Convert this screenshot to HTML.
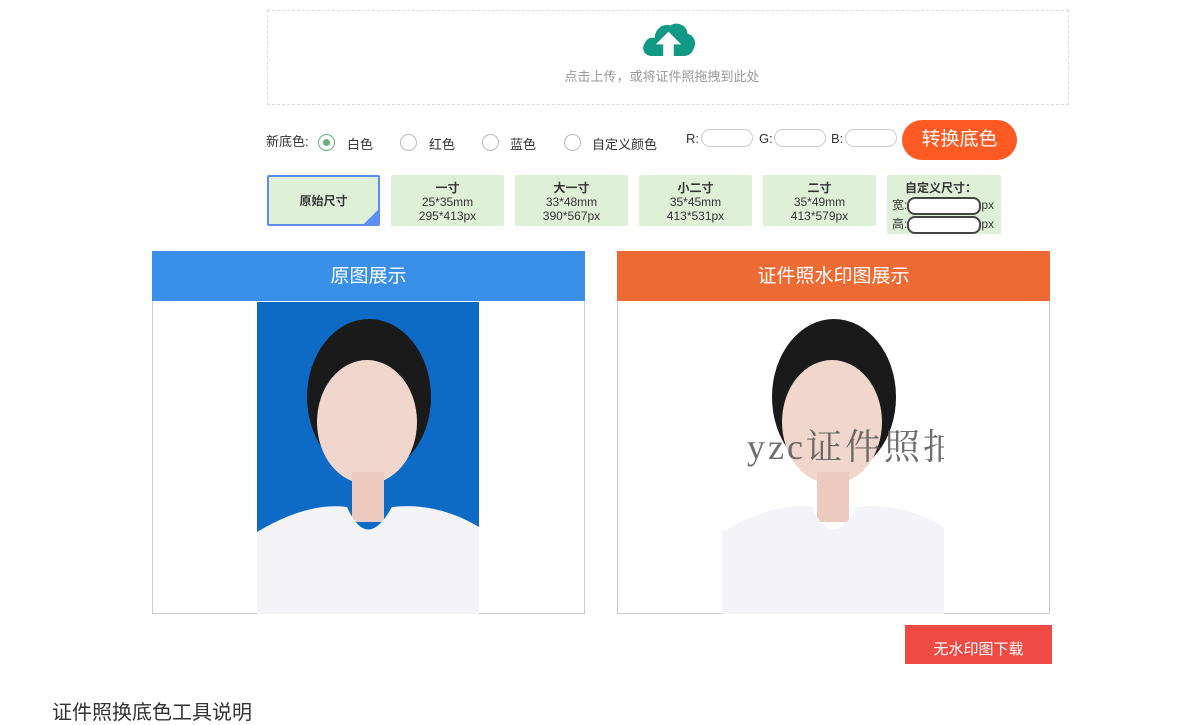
<!DOCTYPE html>
<html><head><meta charset="utf-8"><style>
body{margin:0;width:1201px;height:722px;background:#fff;font-family:"Liberation Sans","Noto Sans CJK SC",sans-serif;position:relative;overflow:hidden}
.abs{position:absolute}
.up{left:267px;top:10px;width:800px;height:93px;border:1px dashed #ddd}
.up .t{position:absolute;top:55px;left:-6px;width:100%;text-align:center;font-size:13px;color:#999}
.rad{width:17px;height:17px;border:1.5px solid #bbb;border-radius:50%;box-sizing:border-box;top:134px}
.lbl{font-size:13px;color:#333;top:134px}
.inp{top:129px;width:52px;height:18px;border:1.5px solid #ccc;border-radius:9px;box-sizing:border-box}
.sz{top:175px;width:113px;height:51px;background:#dff0d8;border-radius:2px;text-align:center;font-size:12px;color:#333;line-height:14px;box-sizing:border-box;padding-top:6px}
.sz b{font-size:12px}
.hd{top:251px;height:50px;color:#fff;font-size:19px;line-height:52px;text-align:center}
.box{top:301px;height:313px;border:1px solid #ccc;border-top:none;box-sizing:border-box}
</style></head><body>
<div class="abs up">
<svg style="position:absolute;left:373px;top:8px" width="55" height="38" viewBox="0 0 52 36"><path d="M10 35 C2 35 0 27 4 22 C6 18 10 17 13 18 C13 10 20 4 28 6 C34 2 44 6 44 14 C50 15 53 22 50 28 C48 33 45 35 41 35 L31 35 L31 24 L38 24 L26 12 L14 24 L21 24 L21 35 Z" fill="#129985"/></svg>
<div class="t">点击上传，或将证件照拖拽到此处</div>
</div>
<div class="abs" style="left:266px;top:131px;font-size:13px;color:#333">新底色:</div>
<div class="abs rad" style="left:318px;border-color:#6bb17c"><div style="width:7px;height:7px;border-radius:50%;background:#6bb17c;margin:3.5px"></div></div>
<div class="abs lbl" style="left:347px">白色</div>
<div class="abs rad" style="left:400px"></div><div class="abs lbl" style="left:429px">红色</div>
<div class="abs rad" style="left:482px"></div><div class="abs lbl" style="left:510px">蓝色</div>
<div class="abs rad" style="left:564px"></div><div class="abs lbl" style="left:592px">自定义颜色</div>
<div class="abs lbl" style="left:686px;top:131px">R:</div><div class="abs inp" style="left:701px"></div>
<div class="abs lbl" style="left:759px;top:131px">G:</div><div class="abs inp" style="left:774px"></div>
<div class="abs lbl" style="left:831px;top:131px">B:</div><div class="abs inp" style="left:845px"></div>
<div class="abs" style="left:902px;top:120px;width:115px;height:40px;border-radius:20px;background:#fd5a24;color:#fff;font-size:19px;line-height:40px;text-align:center">转换底色</div>
<div class="abs sz" style="left:267px;border:2px solid #5b8ef0;padding-top:17px;overflow:hidden"><b>原始尺寸</b><div style="position:absolute;right:-10px;bottom:-10px;width:20px;height:20px;background:#5b8ef0;transform:rotate(45deg)"></div></div>
<div class="abs sz" style="left:391px"><b>一寸</b><br>25*35mm<br>295*413px</div>
<div class="abs sz" style="left:515px"><b>大一寸</b><br>33*48mm<br>390*567px</div>
<div class="abs sz" style="left:639px"><b>小二寸</b><br>35*45mm<br>413*531px</div>
<div class="abs sz" style="left:763px"><b>二寸</b><br>35*49mm<br>413*579px</div>
<div class="abs sz" style="left:887px;height:59px;width:114px;text-align:left;padding-left:5px"><b style="margin-left:13px">自定义尺寸：</b><br>
<div style="margin-top:2px">宽:<span style="display:inline-block;width:70px;height:14px;border:2px solid #444;border-radius:8px;background:#fff;vertical-align:middle"></span>px</div>
<div style="margin-top:1px">高:<span style="display:inline-block;width:70px;height:14px;border:2px solid #444;border-radius:8px;background:#fff;vertical-align:middle"></span>px</div></div>
<div class="abs hd" style="left:152px;width:433px;background:#3a90e8">原图展示</div>
<div class="abs hd" style="left:617px;width:433px;background:#ef6b35">证件照水印图展示</div>
<div class="abs box" style="left:152px;width:433px"></div>
<div class="abs box" style="left:617px;width:433px"></div>
<svg class="abs" style="left:257px;top:302px" width="222" height="312"><rect width="222" height="312" fill="#0d6bc6"/>
<ellipse cx="112" cy="95" rx="62" ry="78" fill="#1a1a1a"/>
<ellipse cx="110" cy="120" rx="50" ry="62" fill="#f0d6cc"/>
<rect x="95" y="170" width="32" height="50" fill="#eccabf"/>
<path d="M0 230 Q50 200 90 205 Q110 250 135 205 Q180 200 222 225 L222 312 L0 312Z" fill="#f3f3f8"/></svg>
<svg class="abs" style="left:722px;top:302px" width="222" height="312"><rect width="222" height="312" fill="#fff"/>
<ellipse cx="112" cy="95" rx="62" ry="78" fill="#1a1a1a"/>
<ellipse cx="110" cy="120" rx="50" ry="62" fill="#f0d6cc"/>
<rect x="95" y="170" width="32" height="50" fill="#eccabf"/>
<path d="M0 230 Q50 200 90 205 Q110 250 135 205 Q180 200 222 225 L222 312 L0 312Z" fill="#f3f3f8"/>
<text x="25" y="157" font-family="Liberation Serif,Noto Serif CJK SC,serif" font-size="36" fill="#555" opacity=".85" letter-spacing="3">yzc证件照拍</text></svg>
<div class="abs" style="left:905px;top:625px;width:147px;height:39px;background:#ef4b44;color:#fff;font-size:15px;text-align:center;line-height:50px">无水印图下载</div>
<div class="abs" style="left:52px;top:696px;font-size:20px;color:#333">证件照换底色工具说明</div>
</body></html>
